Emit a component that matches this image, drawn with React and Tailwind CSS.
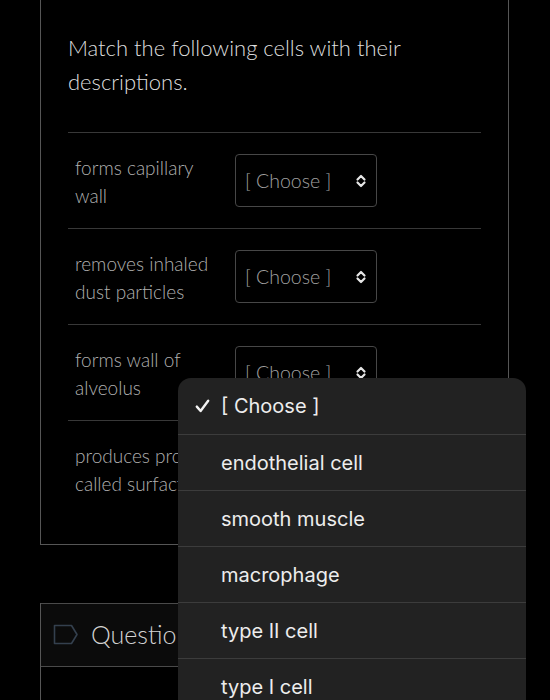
const rows = [
  { text: "forms capillary wall" },
  { text: "removes inhaled dust particles" },
  { text: "forms wall of alveolus" },
  { text: "produces protein called surfactant" },
];

const options = ["[ Choose ]", "endothelial cell", "smooth muscle", "macrophage", "type II cell", "type I cell"];

function UpDown() {
  return (
    <svg width="12" height="14" viewBox="0 0 12 14" fill="none" stroke="#e6e6e6" strokeWidth="2.2" strokeLinecap="round" strokeLinejoin="round">
      <path d="M2.5 5.5 6 2l3.5 3.5" />
      <path d="M2.5 8.5 6 12l3.5-3.5" />
    </svg>
  );
}

function Check() {
  return (
    <svg width="15" height="14" viewBox="0 0 15 14" fill="none" stroke="#f2f2f2" strokeWidth="2.4" strokeLinecap="round" strokeLinejoin="round">
      <path d="M1.8 7.6 5.6 12 13.2 1.8" />
    </svg>
  );
}

function Select() {
  return (
    <div className="flex h-[53px] w-[142px] shrink-0 items-center justify-between rounded-[4px] border border-[#474747] bg-black pl-[9px] pr-[9px]">
      <span className="text-[19.5px] font-light text-[#a0a0a0]">[ Choose ]</span>
      <UpDown />
    </div>
  );
}

export default function App() {
  return (
    <div className="relative h-[700px] w-[550px] overflow-hidden bg-black" style={{ fontFamily: "Lato, 'Open Sans', sans-serif" }}>
      {/* Question card */}
      <div className="ml-[40px] mt-[-2px] w-[469px] border border-[#565656] px-[27px] pb-[46px] pt-[32px]">
        <p className="w-[380px] text-[22px] font-light leading-[34px] text-[#dedede]">Match the following cells with their descriptions.</p>

        <div className="mt-[33px]">
          {rows.map((r, i) => (
            <div
              key={r.text}
              className={`flex items-start gap-[10px] border-t border-[#383838] pl-[7px] pt-[21px] ${i < rows.length - 1 ? "pb-[18px]" : ""}`}
            >
              <p className="w-[150px] shrink-0 text-[19px] font-light leading-[28px] text-[#b0b0b0]">{r.text}</p>
              <Select />
            </div>
          ))}
        </div>
      </div>

      {/* Next question header */}
      <div className="ml-[40px] mt-[58px] w-[469px] border-l border-[#565656]">
        <div className="flex h-[64px] items-center gap-[12px] border-y border-[#4a4a4a] bg-[#0b0b0b] pl-[12px]">
          <svg width="26" height="22" viewBox="0 0 26 22" fill="none" stroke="#34404e" strokeWidth="1.6" strokeLinejoin="round">
            <path d="M1.5 1.5h17l5.5 9-5.5 9h-17z" />
          </svg>
          <span className="text-[25px] font-light text-[#d2d2d2]">Question 3</span>
        </div>
        <div className="h-[60px]" />
      </div>

      {/* Native picker popup */}
      <div
        className="absolute left-[178px] top-[378px] w-[348px] overflow-hidden rounded-[13px] bg-[#222222] text-[#ededed]"
        style={{ fontFamily: "Inter, 'Noto Sans', sans-serif" }}
      >
        {options.map((o, i) => (
          <div key={o} className={`flex h-[56px] items-center ${i > 0 ? "border-t border-[#3c3c3c]" : ""}`}>
            <div className="flex w-[43px] shrink-0 justify-end pr-[11px]">{i === 0 && <Check />}</div>
            <span className="text-[20px]">{o}</span>
          </div>
        ))}
      </div>
    </div>
  );
}
